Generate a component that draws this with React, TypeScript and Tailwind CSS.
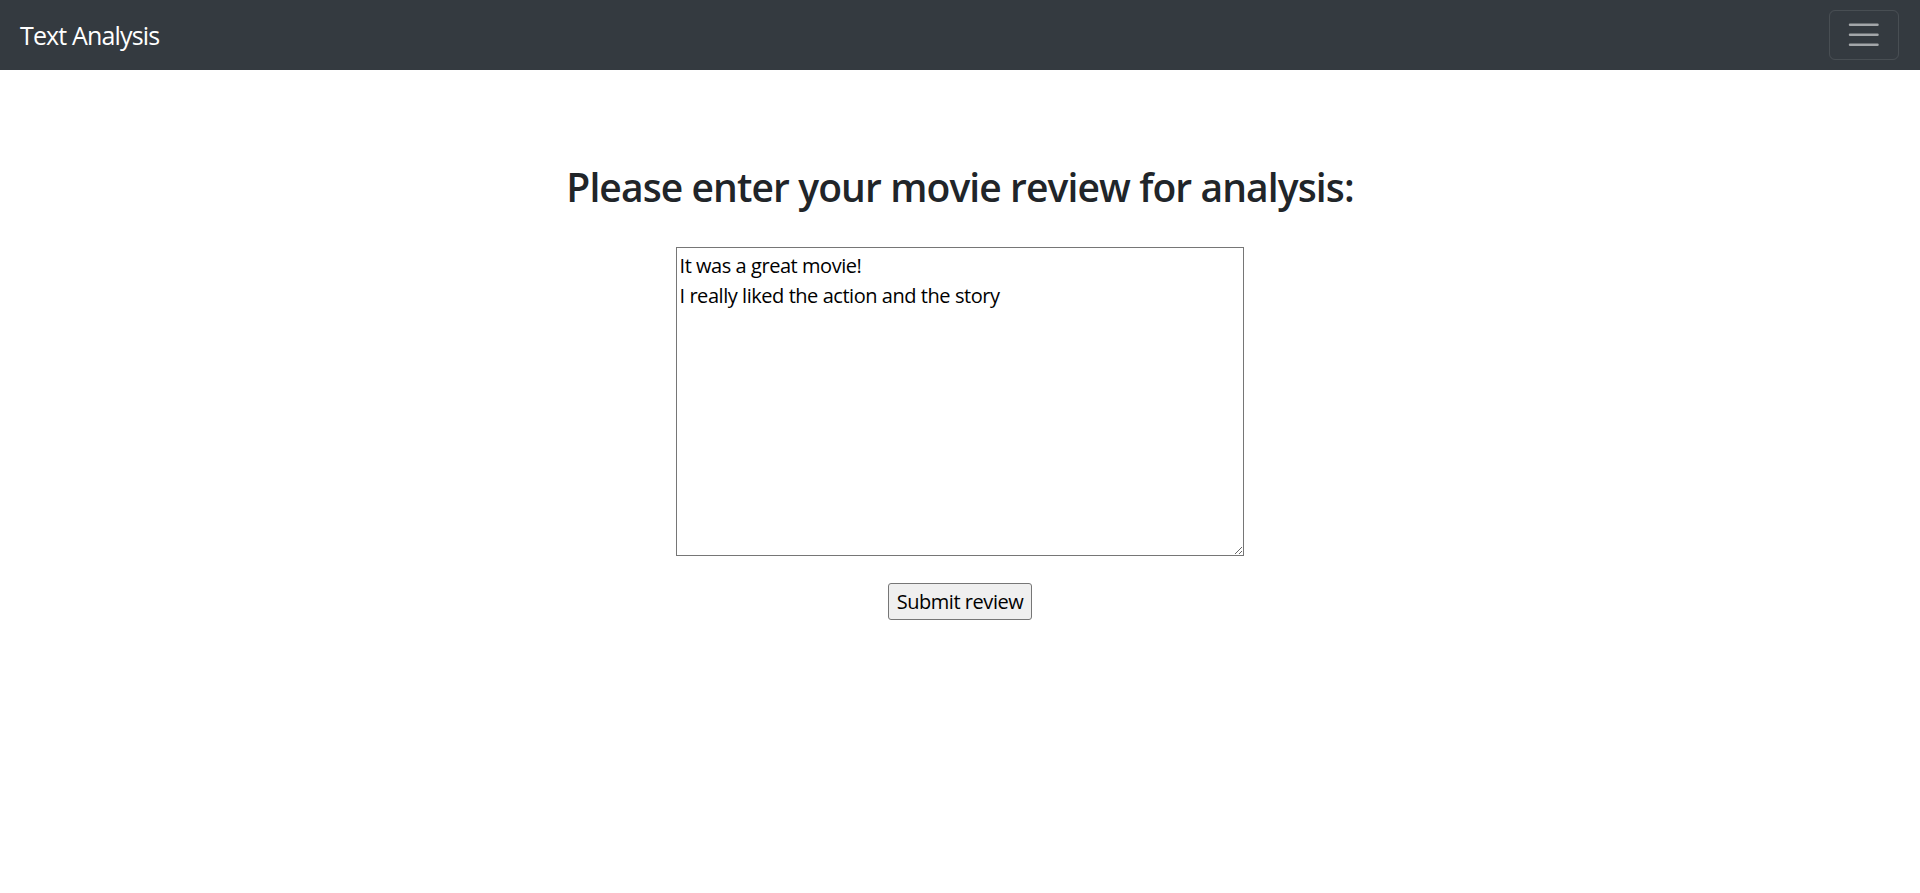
import React, { useState } from 'react';

function NavbarToggler() {
  return (
    <button
      type="button"
      aria-label="Toggle navigation"
      className="w-[70px] h-[50px] flex items-center justify-center border border-white/10 rounded-[6px]"
    >
      <svg width="37.5" height="37.5" viewBox="0 0 30 30">
        <path
          d="M4 7h22M4 15h22M4 23h22"
          stroke="rgba(255,255,255,0.55)"
          strokeWidth="2"
          strokeLinecap="round"
          strokeMiterlimit="10"
        />
      </svg>
    </button>
  );
}

export default function App() {
  const [review, setReview] = useState('It was a great movie!\nI really liked the action and the story');

  return (
    <div className="min-h-screen bg-white font-['Open_Sans',sans-serif] text-[#212529]">
      {/* Navbar */}
      <nav className="h-[70px] bg-[#343a40] flex items-center justify-between pl-5 pr-[21px]">
        <span className="text-[25px] leading-none tracking-[-0.85px] text-white">Text Analysis</span>
        <NavbarToggler />
      </nav>

      {/* Form */}
      <main className="flex flex-col items-center pt-[93px]">
        <h2 className="text-[39px] leading-[48px] font-semibold tracking-[-0.9px] mb-[36px]">
          Please enter your movie review for analysis:
        </h2>
        <textarea
          value={review}
          onChange={(e) => setReview(e.target.value)}
          className="w-[568px] h-[309px] border border-[#767676] p-[2.5px] text-[20px] leading-[30px] tracking-[-0.45px] text-black resize-y outline-none"
        />
        <button
          type="submit"
          className="mt-[27px] w-[144px] h-[37px] text-[20px] leading-none tracking-[-0.45px] bg-[#efefef] border border-[#767676] rounded-[3px] text-black"
        >
          Submit review
        </button>
      </main>
    </div>
  );
}
